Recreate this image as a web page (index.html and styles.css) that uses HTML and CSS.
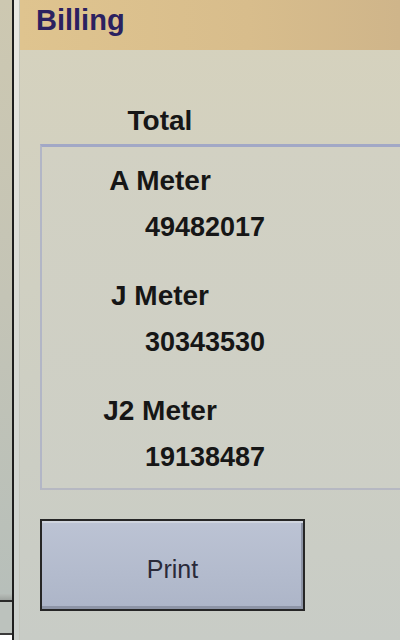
FILE: index.html
```html
<!DOCTYPE html>
<html>
<head>
<meta charset="utf-8">
<link rel="stylesheet" href="styles.css">
</head>
<body>
<div class="screen">
  <div class="side">
    <div class="side-fill"></div>
    <div class="side-tab"></div>
    <div class="side-rest"></div>
  </div>
  <div class="edge"></div>
  <div class="main">
    <div class="header"><span class="title">Billing</span></div>
    <div class="total">Total</div>
    <div class="box">
      <div class="group">
        <div class="label">A Meter</div>
        <div class="value">49482017</div>
      </div>
      <div class="group">
        <div class="label">J Meter</div>
        <div class="value">30343530</div>
      </div>
      <div class="group">
        <div class="label">J2 Meter</div>
        <div class="value">19138487</div>
      </div>
    </div>
    <div class="btn">Print</div>
  </div>
</div>
</body>
</html>
```
FILE: styles.css
```css
html, body {
  margin: 0;
  padding: 0;
}
body {
  width: 400px;
  height: 640px;
  overflow: hidden;
  font-family: "Liberation Sans", Arial, sans-serif;
}
.screen {
  display: flex;
  width: 400px;
  height: 640px;
}
.side {
  width: 12px;
  display: flex;
  flex-direction: column;
  border-right: 2px solid #1e1e1e;
}
.side-fill {
  height: 594px;
  background: linear-gradient(#cdc8b1, #c4c4b6 50%, #b7bfba);
}
.side-tab {
  height: 6px;
  background: linear-gradient(#b7bdb8, #9ea39f);
  border-bottom: 2px solid #2a2a2a;
}
.side-rest {
  flex: 1;
  background: #bcc2bd;
  border-bottom: 2px solid #3a3a3a;
  margin-bottom: 5px;
}
.edge {
  width: 5px;
  background: linear-gradient(#e9e8e2, #d8dad4 50%, #cbd0cc);
  border-right: 1px solid #c4c6bc;
}
.main {
  flex: 1;
  display: flex;
  flex-direction: column;
  background: linear-gradient(#d6d2bd, #d0d0c2 45%, #c8ccc6);
}
.header {
  height: 50px;
  background: linear-gradient(90deg, #dfc48f, #d8bd8c 60%, #cfb58a);
  display: flex;
  align-items: flex-start;
  padding-left: 16px;
}
.title {
  font-weight: bold;
  font-size: 29px;
  line-height: 40px;
  color: #2b2160;
}
.total {
  margin-top: 56px;
  margin-left: 40px;
  width: 200px;
  text-align: center;
  font-weight: bold;
  font-size: 28px;
  line-height: 30px;
  color: #161616;
}
.box {
  box-sizing: border-box;
  margin-top: 8px;
  margin-left: 20px;
  height: 346px;
  border-top: 3px solid #a2a8c6;
  border-left: 2px solid #b2b6c6;
  border-bottom: 2px solid #b6b8c2;
  padding-top: 19px;
  display: flex;
  flex-direction: column;
  gap: 39px;
  background: linear-gradient(#d2d1c3, #cdcfc6);
}
.group {
  display: flex;
  flex-direction: column;
  gap: 16px;
}
.label, .value {
  width: 200px;
  text-align: center;
  font-weight: bold;
  line-height: 30px;
  color: #161616;
}
.label {
  margin-left: 18px;
  font-size: 28px;
}
.value {
  margin-left: 63px;
  font-size: 27px;
}
.btn {
  box-sizing: border-box;
  margin-top: 29px;
  margin-left: 20px;
  width: 265px;
  height: 92px;
  border: 2px solid #262626;
  background: linear-gradient(#bcc3d4, #b3bbcd 60%, #adb5c8);
  box-shadow: inset 0 2px 0 #cfd4de, inset -2px -3px 0 #8d94a6;
  display: flex;
  align-items: center;
  justify-content: center;
  padding-top: 8px;
  font-size: 25px;
  color: #2a2a3a;
}
```
